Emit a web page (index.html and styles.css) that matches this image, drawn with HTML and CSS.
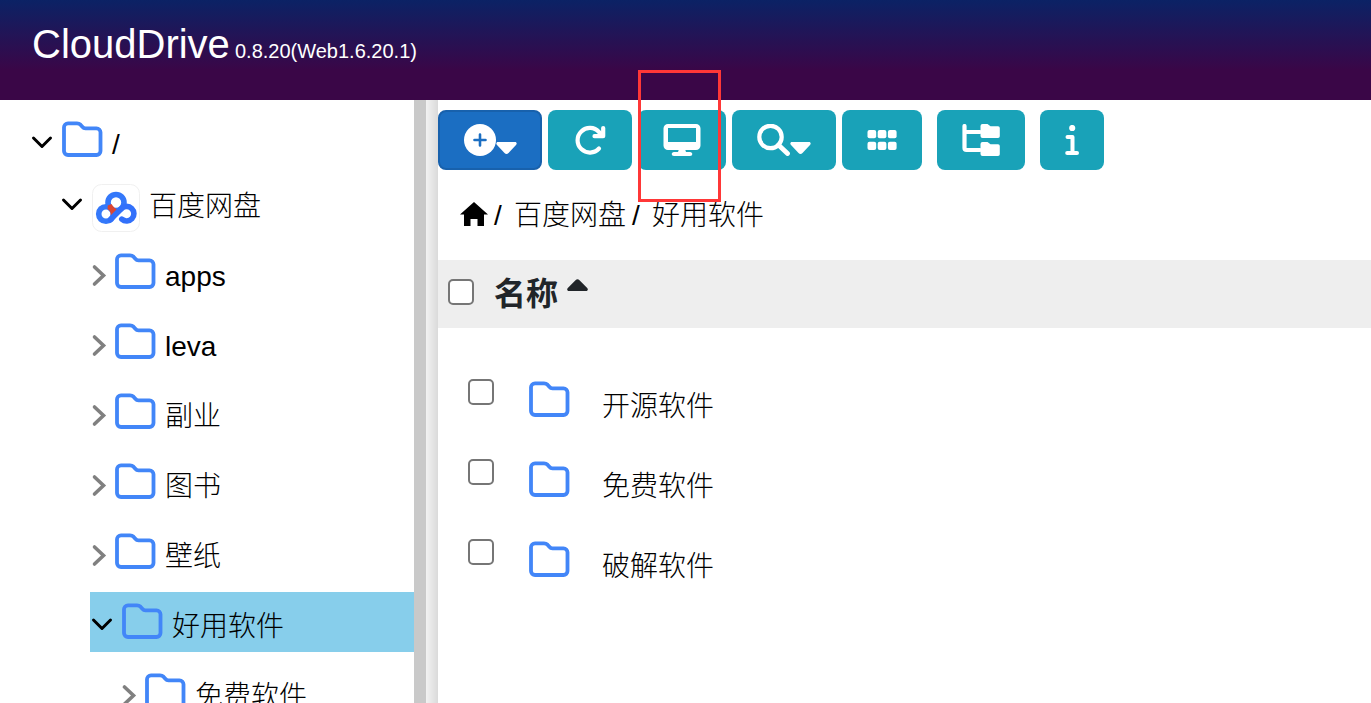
FILE: index.html
```html
<!DOCTYPE html>
<html lang="zh-CN">
<head>
    <meta charset="UTF-8">
    <meta name="viewport" content="width=device-width, initial-scale=1.0">
    <title>CloudDrive</title>
    <link rel="stylesheet" href="styles.css">
</head>
<body>
    <!-- shared shapes -->
    <svg class="defs" width="0" height="0" aria-hidden="true">
        <symbol id="folder" viewBox="0 0 41 36">
            <path d="M6 2.300H15C16.700 2.300 17.500 2.700 18.500 3.700L20.300 5.700C21.200 6.800 22 7.300 23.500 7.300H34.500A4 4 0 0 1 38.500 11.300V30A4 4 0 0 1 34.500 34H6A4 4 0 0 1 2 30V6.300A4 4 0 0 1 6 2.300Z" fill="none" stroke="#4286f8" stroke-width="3.800"/>
        </symbol>
        <symbol id="chevron-down" viewBox="0 0 24 24">
            <path d="M3.500 7L12 15.500L20.500 7" fill="none" stroke="#000" stroke-width="3" stroke-linecap="round" stroke-linejoin="round"/>
        </symbol>
        <symbol id="chevron-right" viewBox="0 0 17 24">
            <path d="M4.500 4L13.500 12.500L4.500 21" fill="none" stroke="#808080" stroke-width="3.600" stroke-linecap="round"/>
        </symbol>
        <symbol id="caret" viewBox="0 0 21 32">
            <path d="M2 18H19C20.800 18 21.200 19.800 20 21L12.500 29C11.300 30.300 9.700 30.300 8.500 29L1 21C-.200 19.800 .200 18 2 18Z" fill="currentColor"/>
        </symbol>
    </svg>

    <header class="header">
        <h1 class="brand">CloudDrive <small>0.8.20(Web1.6.20.1)</small></h1>
    </header>

    <div class="layout">
        <nav class="sidebar">
            <ul class="tree">
                <li>
                    <div class="node root">
                        <svg class="chev open"><use href="#chevron-down"/></svg>
                        <svg class="folder"><use href="#folder"/></svg>
                        <a href="#">/</a>
                    </div>
                    <ul>
                        <li>
                            <div class="node drive">
                                <svg class="chev open"><use href="#chevron-down"/></svg>
                                <svg class="logo" viewBox="0 0 48 48">
                                    <rect x=".5" y=".5" width="47" height="47" rx="9" fill="#fff" stroke="#f0f0f0"/>
                                    <g fill="none" stroke="#3478fa" stroke-width="5.600">
                                        <circle cx="24" cy="18.500" r="8"/>
                                        <circle cx="14" cy="30" r="7.300"/>
                                    </g>
                                    <path d="M15.800 21.500L19.500 20C21 22.500 23 24.500 25.500 26L20.500 32L18.700 31C19 28.500 18 26.500 15.500 25Z" fill="#dc4632"/>
                                    <path d="M18.500 35.500L29.500 24.500A7.300 7.300 0 1 1 29.800 35.200" fill="none" stroke="#3270fa" stroke-width="5.600" stroke-linecap="round"/>
                                </svg>
                                <a href="#">百度网盘</a>
                            </div>
                            <ul>
                                <li>
                                    <div class="node">
                                        <svg class="chev"><use href="#chevron-right"/></svg>
                                        <svg class="folder"><use href="#folder"/></svg>
                                        <a href="#">apps</a>
                                    </div>
                                </li>
                                <li>
                                    <div class="node">
                                        <svg class="chev"><use href="#chevron-right"/></svg>
                                        <svg class="folder"><use href="#folder"/></svg>
                                        <a href="#">leva</a>
                                    </div>
                                </li>
                                <li>
                                    <div class="node">
                                        <svg class="chev"><use href="#chevron-right"/></svg>
                                        <svg class="folder"><use href="#folder"/></svg>
                                        <a href="#">副业</a>
                                    </div>
                                </li>
                                <li>
                                    <div class="node">
                                        <svg class="chev"><use href="#chevron-right"/></svg>
                                        <svg class="folder"><use href="#folder"/></svg>
                                        <a href="#">图书</a>
                                    </div>
                                </li>
                                <li>
                                    <div class="node">
                                        <svg class="chev"><use href="#chevron-right"/></svg>
                                        <svg class="folder"><use href="#folder"/></svg>
                                        <a href="#">壁纸</a>
                                    </div>
                                </li>
                                <li>
                                    <div class="node selected">
                                        <svg class="chev open"><use href="#chevron-down"/></svg>
                                        <svg class="folder"><use href="#folder"/></svg>
                                        <a href="#">好用软件</a>
                                    </div>
                                    <ul>
                                        <li>
                                            <div class="node">
                                                <svg class="chev"><use href="#chevron-right"/></svg>
                                                <svg class="folder"><use href="#folder"/></svg>
                                                <a href="#">免费软件</a>
                                            </div>
                                        </li>
                                    </ul>
                                </li>
                            </ul>
                        </li>
                    </ul>
                </li>
            </ul>
        </nav>
        <div class="splitter"></div>

        <main class="content">
            <div class="toolbar">
                <div class="btn-group">
                    <button class="btn btn-add" aria-label="添加">
                        <svg width="33" height="32" viewBox="0 0 33 32">
                            <circle cx="17" cy="16" r="16" fill="currentColor"/>
                            <path d="M17 10.500V21.500M11.500 16H22.500" stroke="#1b6ec2" stroke-width="2.600" stroke-linecap="round"/>
                        </svg>
                        <svg width="21" height="32"><use href="#caret"/></svg>
                    </button>
                    <button class="btn btn-refresh" aria-label="刷新">
                        <svg width="32" height="30" viewBox="0 0 32 30">
                            <path d="M25 23.500A12.300 12.300 0 1 1 25 7L27 9" fill="none" stroke="currentColor" stroke-width="4.200" stroke-linecap="round"/>
                            <path d="M29.200 3V11.200H20.500" fill="none" stroke="currentColor" stroke-width="4.200" stroke-linecap="round" stroke-linejoin="round"/>
                        </svg>
                    </button>
                    <div class="marked">
                        <button class="btn btn-screen" aria-label="挂载">
                            <svg width="38" height="32" viewBox="0 0 38 32">
                                <path d="M5 0H33A4.500 4.500 0 0 1 37.500 4.500V21.500A4.500 4.500 0 0 1 33 26H5A4.500 4.500 0 0 1 .5 21.500V4.500A4.500 4.500 0 0 1 5 0ZM5 4V18H33V4Z" fill="currentColor" fill-rule="evenodd"/>
                                <path d="M16 25H22L23 28H27C30 28 30 32 27 32H11C8 32 8 28 11 28H15Z" fill="currentColor"/>
                            </svg>
                        </button>
                        <span class="marker"></span>
                    </div>
                    <button class="btn btn-search" aria-label="搜索">
                        <svg width="33" height="32" viewBox="0 0 33 32">
                            <circle cx="13.500" cy="13" r="11.200" fill="none" stroke="currentColor" stroke-width="4.200"/>
                            <path d="M21.500 21L30.500 29.500" stroke="currentColor" stroke-width="4.800" stroke-linecap="round"/>
                        </svg>
                        <svg width="21" height="32"><use href="#caret"/></svg>
                    </button>
                    <button class="btn btn-grid" aria-label="视图">
                        <svg width="30" height="20" viewBox="0 0 30 20" fill="currentColor">
                            <rect x=".5" width="8.700" height="8.200" rx="2"/>
                            <rect x="10.700" width="8.700" height="8.200" rx="2"/>
                            <rect x="20.900" width="8.700" height="8.200" rx="2"/>
                            <rect x=".5" y="11.800" width="8.700" height="8.200" rx="2"/>
                            <rect x="10.700" y="11.800" width="8.700" height="8.200" rx="2"/>
                            <rect x="20.900" y="11.800" width="8.700" height="8.200" rx="2"/>
                        </svg>
                    </button>
                </div>
                <button class="btn btn-tree" aria-label="目录树">
                    <svg width="38" height="32" viewBox="0 0 38 32">
                        <path d="M2.500 2V24A2 2 0 0 0 4.500 26H18M3 8H18" fill="none" stroke="currentColor" stroke-width="4.200" stroke-linecap="round"/>
                        <path d="M20.500 0H25.500L28.500 2.300H36A1.800 1.800 0 0 1 37.800 4.100V12.200A1.800 1.800 0 0 1 36 14H20.500A2 2 0 0 1 18.500 12V2A2 2 0 0 1 20.500 0Z" fill="currentColor"/>
                        <path d="M20.500 18H25.500L28.500 20.300H36A1.800 1.800 0 0 1 37.800 22.100V30.200A1.800 1.800 0 0 1 36 32H20.500A2 2 0 0 1 18.500 30V20A2 2 0 0 1 20.500 18Z" fill="currentColor"/>
                    </svg>
                </button>
                <button class="btn btn-info" aria-label="关于">
                    <svg width="14" height="30" viewBox="0 0 14 30">
                        <circle cx="7.200" cy="3" r="3.100" fill="currentColor"/>
                        <path d="M2.500 12H7.500V28M2.200 28H12" fill="none" stroke="currentColor" stroke-width="4" stroke-linecap="round" stroke-linejoin="round"/>
                    </svg>
                </button>
            </div>

            <nav class="breadcrumb">
                <a href="#" aria-label="主页">
                    <svg class="home" viewBox="0 0 28 24"><path d="M14 0L28 12.500H24V24H17.500V17H10.500V24H4V12.500H0Z"/></svg>
                </a>
                <span class="sep">/</span>
                <a href="#">百度网盘</a>
                <span class="sep">/</span>
                <a href="#">好用软件</a>
            </nav>

            <table class="files">
                <thead>
                    <tr>
                        <th class="check"><input type="checkbox" aria-label="全选"></th>
                        <th class="name">
                            <span class="sort">名称
                                <svg width="21" height="12" viewBox="0 0 21 12"><path d="M2 12C0 12-.3 10 .8 9L8.500 1.200Q10.500-.7 12.500 1.200L20.200 9C21.300 10 21 12 19 12Z" fill="currentColor"/></svg>
                            </span>
                        </th>
                    </tr>
                </thead>
                <tbody>
                    <tr>
                        <td class="check"><input type="checkbox" id="f1"></td>
                        <td><label class="entry" for="f1"><svg class="folder"><use href="#folder"/></svg><span>开源软件</span></label></td>
                    </tr>
                    <tr>
                        <td class="check"><input type="checkbox" id="f2"></td>
                        <td><label class="entry" for="f2"><svg class="folder"><use href="#folder"/></svg><span>免费软件</span></label></td>
                    </tr>
                    <tr>
                        <td class="check"><input type="checkbox" id="f3"></td>
                        <td><label class="entry" for="f3"><svg class="folder"><use href="#folder"/></svg><span>破解软件</span></label></td>
                    </tr>
                </tbody>
            </table>
        </main>
    </div>
</body>
</html>
```
FILE: styles.css
```css
:root {
    --color-info: #19a2b8;
    --color-primary: #1b6ec2;
    --color-selected: #87ceeb;
    --color-text: #212529;
}

* {
    margin: 0;
    padding: 0;
    box-sizing: border-box;
}

body {
    display: flex;
    flex-direction: column;
    height: 100vh;
    overflow: hidden;
    background: #fff;
    color: #000;
    font-family: "Liberation Sans", "Noto Sans CJK SC", sans-serif;
    font-size: 28px;
    font-weight: 300;
    line-height: 40px;
}

a {
    color: inherit;
    text-decoration: none;
}

ul {
    list-style: none;
}

svg {
    display: block;
    flex: none;
}

.defs {
    position: absolute;
}

.header {
    flex: none;
    height: 100px;
    padding: 20px 32px;
    background: linear-gradient(180deg, #0b2265 0%, #3a0647 70%);
    color: #fff;
}

.brand {
    font-size: 40px;
    font-weight: 400;
    line-height: 48px;
    white-space: nowrap;
}

.brand small {
    margin-left: -6px;
    font-size: 20px;
}

.layout {
    display: flex;
    flex: 1;
    min-height: 0;
}

/* directory tree */
.sidebar {
    flex: 0 0 414px;
    overflow: hidden;
}

.tree {
    padding: 10px 0 0 30px;
}

.tree ul {
    padding-left: 30px;
}

.node {
    display: flex;
    height: 60px;
    margin-bottom: 10px;
    white-space: nowrap;
}

.node.root {
    margin-bottom: 2px;
}

.node.selected {
    background: var(--color-selected);
}

.node a {
    margin: 15px 0 0 9px;
}

.chev {
    width: 17px;
    height: 24px;
    margin: 21px 8px 0 0;
}

.chev.open {
    width: 24px;
}

.folder {
    width: 41px;
    height: 36px;
    margin-top: 11px;
}

.logo {
    width: 48px;
    height: 48px;
    margin-top: 12px;
}

.splitter {
    flex: 0 0 24px;
    border-left: 12px solid #c9c9c9;
    background: linear-gradient(90deg, #f2f2f2, #dadada);
}

.content {
    flex: 1;
    min-width: 0;
}

/* toolbar */
.toolbar {
    display: flex;
    gap: 15px;
    padding-top: 10px;
}

.btn-group {
    display: flex;
    gap: 6px;
}

.btn {
    display: flex;
    align-items: center;
    justify-content: center;
    height: 60px;
    padding: 0 25px;
    border: 0;
    border-radius: 8px;
    background: var(--color-info);
    color: #fff;
    cursor: pointer;
}

.btn-add {
    border: 2px solid #1861ac;
    padding: 0 23px;
    background: var(--color-primary);
}

.btn-refresh {
    padding: 0 26px;
}

.marked {
    position: relative;
}

.marker {
    position: absolute;
    top: -40px;
    left: 0;
    width: 83px;
    height: 132px;
    border: 3px solid #ff3737;
    pointer-events: none;
}

.breadcrumb {
    display: flex;
    align-items: center;
    height: 90px;
    padding: 2px 0 0 22px;
    white-space: nowrap;
}

.home {
    width: 28px;
    height: 24px;
    margin-bottom: 4px;
}

.sep {
    width: 20px;
    margin-left: 6px;
}

/* file list */
.files {
    width: 100%;
    border-collapse: collapse;
    text-align: left;
}

.files thead {
    background: #eee;
    color: var(--color-text);
    font-size: 32px;
}

.files thead tr {
    height: 68px;
}

.files tbody::before {
    content: "";
    display: block;
    height: 32px;
}

.files tbody tr {
    height: 80px;
}

.files td {
    vertical-align: top;
}

.files .check {
    width: 56px;
    padding-left: 10px;
}

.files td.check {
    padding: 19px 0 0 30px;
}

.files input {
    display: block;
    width: 26px;
    height: 26px;
    appearance: none;
    border: 2px solid #767676;
    border-radius: 5px;
    background: #fff;
}

.files input:checked {
    background: var(--color-primary);
}

.files th input {
    margin-top: -4px;
}

.sort {
    display: flex;
    gap: 9px;
}

.sort svg {
    margin-top: 5px;
}

.entry {
    display: flex;
    gap: 32px;
    padding: 10px 0 0 35px;
}

.entry span {
    margin-top: 17px;
}
```
